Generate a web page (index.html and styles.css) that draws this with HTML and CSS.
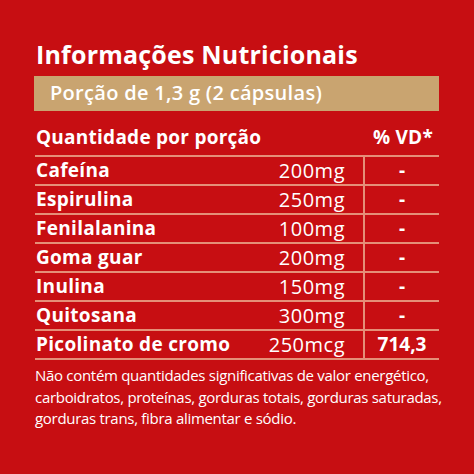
FILE: index.html
```html
<!DOCTYPE html>
<html lang="pt">
<head>
<meta charset="utf-8">
<link rel="stylesheet" href="styles.css">
</head>
<body>
<main class="panel">
  <h1 class="title">Informações Nutricionais</h1>
  <div class="portion">Porção de 1,3 g (2 cápsulas)</div>
  <div class="head">
    <span>Quantidade por porção</span>
    <span class="vd-head">% VD*</span>
  </div>
  <table class="facts">
    <colgroup><col class="c-name"><col class="c-amt"><col class="c-vd"></colgroup>
    <tbody>
      <tr><td class="name">Cafeína</td><td class="amt">200mg</td><td class="vd">-</td></tr>
      <tr><td class="name">Espirulina</td><td class="amt">250mg</td><td class="vd">-</td></tr>
      <tr><td class="name">Fenilalanina</td><td class="amt">100mg</td><td class="vd">-</td></tr>
      <tr><td class="name">Goma guar</td><td class="amt">200mg</td><td class="vd">-</td></tr>
      <tr><td class="name">Inulina</td><td class="amt">150mg</td><td class="vd">-</td></tr>
      <tr><td class="name">Quitosana</td><td class="amt">300mg</td><td class="vd">-</td></tr>
      <tr><td class="name">Picolinato de cromo</td><td class="amt">250mcg</td><td class="vd strong">714,3</td></tr>
    </tbody>
  </table>
  <p class="note">Não contém quantidades significativas de valor energético,<br>carboidratos, proteínas, gorduras totais, gorduras saturadas,<br>gorduras trans, fibra alimentar e sódio.</p>
</main>
</body>
</html>
```
FILE: styles.css
```css
html, body {
  margin: 0;
  padding: 0;
  background: #c70e12;
}
body {
  width: 474px;
  height: 474px;
  overflow: hidden;
  font-family: "Open Sans", "Liberation Sans", sans-serif;
  color: #fff;
}
.panel {
  padding: 37px 35px 0 35px;
  width: 404px;
}
.title {
  margin: 0 0 0 1px;
  font-size: 25px;
  font-weight: 700;
  line-height: 34px;
  letter-spacing: 0.2px;
  white-space: nowrap;
}
.portion {
  margin-top: 5px;
  height: 35px;
  background: #c9a470;
  font-size: 20px;
  font-weight: 600;
  line-height: 34px;
  letter-spacing: 0.3px;
  padding-left: 16px;
  margin-left: -1px;
  white-space: nowrap;
}
.head {
  display: flex;
  justify-content: space-between;
  font-size: 19px;
  font-weight: 700;
  line-height: 24px;
  letter-spacing: 0.25px;
  padding: 14px 6px 6px 1px;
  border-bottom: 2px solid #e58f78;
  white-space: nowrap;
}
.facts {
  width: 404px;
  table-layout: fixed;
  border-collapse: collapse;
}
.c-name { width: 210px; }
.c-amt { width: 119px; }
.c-vd { width: 75px; }
.facts td {
  height: 27px;
  padding: 0;
  border-bottom: 2px solid #e58f78;
  font-size: 19px;
  line-height: 27px;
  white-space: nowrap;
}
.name {
  font-weight: 700;
  padding-left: 1px !important;
  letter-spacing: 0.3px;
}
.amt {
  text-align: right;
  padding-right: 18px !important;
  border-right: 2px solid #e58f78;
  font-weight: 400;
  font-size: 20px !important;
  letter-spacing: 0.5px;
}
.vd {
  text-align: center;
  font-weight: 700;
}
.note {
  margin: 5px 0 0 0;
  font-size: 15px;
  line-height: 21.5px;
  letter-spacing: -0.3px;
  white-space: nowrap;
}
```
